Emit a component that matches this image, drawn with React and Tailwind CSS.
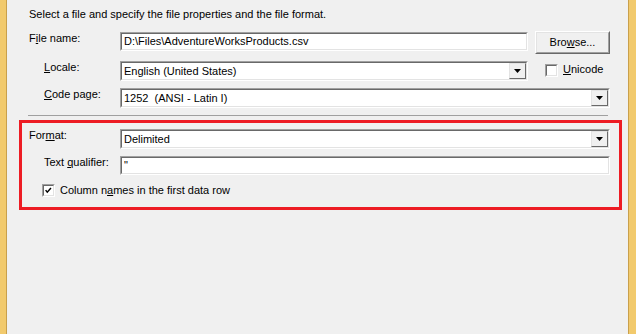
import React from "react";

const FONT = { fontFamily: "'Liberation Sans', Arial, sans-serif" };

// sunken 3D frame used by text boxes, combos and checkboxes
const Sunken = ({ className = "", children }) => (
  <div className={`border border-t-[#a0a0a0] border-l-[#a0a0a0] border-b-white border-r-white ${className}`}>
    <div className="w-full h-full border border-t-[#696969] border-l-[#696969] border-b-[#e3e3e3] border-r-[#e3e3e3] bg-white flex items-center">
      {children}
    </div>
  </div>
);

const Arrow = () => (
  <div className="w-[17px] h-full border border-t-[#e3e3e3] border-l-[#e3e3e3] border-b-[#696969] border-r-[#696969] bg-[#f0f0f0] flex items-center justify-center">
    <svg width="7" height="4" viewBox="0 0 7 4">
      <polygon points="0,0 7,0 3.5,4" fill="#000" />
    </svg>
  </div>
);

const Combo = ({ value, width }) => (
  <Sunken className={`${width} h-[20px] mt-[1px]`}>
    <span className="flex-1 pl-[2px] leading-[13px] whitespace-pre">{value}</span>
    <div className="h-full">
      <Arrow />
    </div>
  </Sunken>
);

const TextBox = ({ value, width }) => (
  <Sunken className={`${width} h-[19px] mt-[1px]`}>
    <span className="flex-1 pl-[2px] leading-[13px]">{value}</span>
  </Sunken>
);

const Check = ({ checked }) => (
  <Sunken className="w-[13px] h-[13px] shrink-0">
    {checked && (
      <svg width="11" height="11" viewBox="0 0 11 11">
        <polyline points="2,5 4,7.5 8.5,2.5" fill="none" stroke="#000" strokeWidth="1.8" />
      </svg>
    )}
  </Sunken>
);

export default function App() {
  return (
    <div className="w-[636px] h-[334px] flex bg-[#f0f0f0] text-[11px] text-black overflow-hidden" style={FONT}>
      <div className="w-[7px] h-full bg-[#f2ca6d] border-r border-[#c9a04c]" />

      <div className="w-[621px] flex flex-col">
        <div className="pt-[8px] pl-[22px] h-[21px] leading-[13px]">
          Select a file and specify the file properties and the file format.
        </div>

        {/* File name */}
        <div className="mt-[10px] h-[24px] flex items-start">
          <div className="ml-[22px] w-[91px] mt-[1px] leading-[13px]">
            F<u>i</u>le name:
          </div>
          <TextBox value="D:\Files\AdventureWorksProducts.csv" width="w-[408px]" />
          <div className="ml-[7px] w-[75px] h-[23px] border border-t-white border-l-white border-b-[#696969] border-r-[#696969]">
            <div className="w-full h-full border border-t-[#e3e3e3] border-l-[#e3e3e3] border-b-[#a0a0a0] border-r-[#a0a0a0] bg-[#f0f0f0] flex items-center justify-center leading-[13px]">
              Bro<u>w</u>se...
            </div>
          </div>
        </div>

        {/* Locale */}
        <div className="mt-[5px] h-[22px] flex items-start">
          <div className="ml-[37px] w-[76px] mt-[1px] leading-[13px]">
            <u>L</u>ocale:
          </div>
          <Combo value="English (United States)" width="w-[408px]" />
          <div className="ml-[17px] mt-[4px]">
            <Check checked={false} />
          </div>
          <div className="ml-[5px] mt-[3px] leading-[13px]">
            <u>U</u>nicode
          </div>
        </div>

        {/* Code page */}
        <div className="mt-[5px] h-[22px] flex items-start">
          <div className="ml-[37px] w-[76px] mt-[1px] leading-[13px]">
            <u>C</u>ode page:
          </div>
          <Combo value="1252  (ANSI - Latin I)" width="w-[490px]" />
        </div>

        <div className="mt-[6px] ml-[21px] w-[580px] h-px bg-[#a0a0a0]" />

        {/* highlighted format group */}
        <div className="mt-[4px] ml-[12px] w-[603px] h-[90px] border-[3px] border-[#ed1c24] flex flex-col pl-[7px]">
          <div className="mt-[5px] h-[22px] flex items-start">
            <div className="w-[91px] mt-[1px] leading-[13px]">
              For<u>m</u>at:
            </div>
            <Combo value="Delimited" width="w-[490px]" />
          </div>

          <div className="mt-[5px] h-[21px] flex items-start">
            <div className="ml-[15px] w-[76px] mt-[1px] leading-[13px]">
              Text <u>q</u>ualifier:
            </div>
            <TextBox value={'"'} width="w-[490px]" />
          </div>

          <div className="mt-[8px] flex items-start">
            <div className="ml-[13px]">
              <Check checked />
            </div>
            <div className="ml-[5px] leading-[13px]">
              Column n<u>a</u>mes in the first data row
            </div>
          </div>
        </div>
      </div>

      <div className="w-[8px] h-full bg-[#f2ca6d] border-l border-[#c9a04c]" />
    </div>
  );
}
